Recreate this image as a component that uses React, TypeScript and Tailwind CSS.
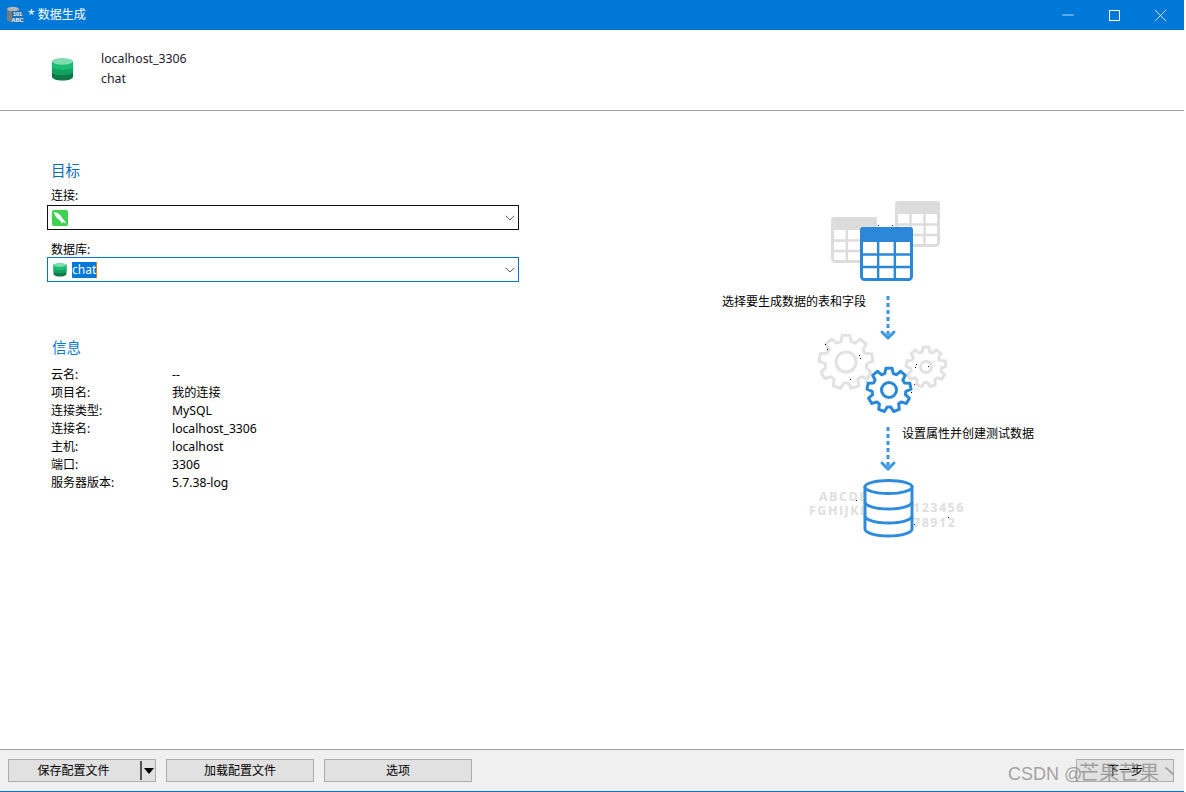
import type { ReactNode } from "react"
import { ChevronDown, Minus, X } from "lucide-react"

const uiFont = "font-['Noto_Sans','Noto_Sans_CJK_SC',sans-serif]"

const infoRows = [
  ["云名:", "--"],
  ["项目名:", "我的连接"],
  ["连接类型:", "MySQL"],
  ["连接名:", "localhost_3306"],
  ["主机:", "localhost"],
  ["端口:", "3306"],
  ["服务器版本:", "5.7.38-log"],
]

// stray pixels that sit on the illustration
const specks: [number, number, string][] = [
  [825, 344, "#000"], [827, 349, "#000"], [859, 355, "#000"], [860, 358, "#000"], [850, 379, "#000"],
  [916, 364, "#000"], [915, 367, "#000"], [928, 366, "#000"], [911, 392, "#000"], [856, 500, "#000"],
  [948, 517, "#000"], [866, 381, "#00e5ff"], [914, 384, "#f00"], [864, 394, "#ff0"], [914, 524, "#00f"],
  [878, 225, "#00f"], [892, 225, "#00f"],
]

function GreenDb({ className }: { className: string }) {
  return (
    <svg viewBox="0 0 24 24" className={className}>
      <path d="M1 4v16c0 2 5 4 11 4s11-2 11-4V4z" fill="#0b7a47" />
      <path d="M1 4v11c0 2 5 3.5 11 3.5S23 17 23 15V4z" fill="#12a25f" />
      <path d="M1 4v5.5c0 2 5 3.5 11 3.5s11-1.5 11-3.5V4z" fill="#1cbc75" />
      <ellipse cx="12" cy="4" rx="11" ry="3.5" fill="#7fdcae" />
    </svg>
  )
}

function TitleIcon() {
  return (
    <svg viewBox="0 0 18 18" className="size-[18px] shrink-0">
      <path d="M1 3v11c0 1.2 3 2 6 2s6-.8 6-2V3z" fill="#7b7b7b" />
      <ellipse cx="7" cy="3" rx="6" ry="2.2" fill="#b5b5b5" />
      <rect x="6" y="5" width="11" height="12" fill="#1f6fb5" />
      <text x="11.5" y="10.2" textAnchor="middle" fontSize="5.5" fontWeight="700" fill="#fff" fontFamily="Liberation Sans">101</text>
      <text x="11.5" y="16" textAnchor="middle" fontSize="5.5" fontWeight="700" fill="#fff" fontFamily="Liberation Sans">ABC</text>
    </svg>
  )
}

function gearPath(cx: number, cy: number, outer: number, inner: number, teeth: number) {
  const pts: string[] = []
  const step = (Math.PI * 2) / teeth
  for (let i = 0; i < teeth; i++) {
    const a = i * step - Math.PI / 2
    const add = (r: number, t: number) =>
      pts.push(`${(cx + r * Math.cos(a + t * step)).toFixed(1)} ${(cy + r * Math.sin(a + t * step)).toFixed(1)}`)
    add(inner, -0.36)
    add(outer, -0.2)
    add(outer, 0.2)
    add(inner, 0.36)
  }
  return "M" + pts.join("L") + "Z"
}

function DataTable({ x, y, w, h, head, color, sw }: { x: number; y: number; w: number; h: number; head: number; color: string; sw: number }) {
  const col = (w - sw) / 3
  const row = (h - head - sw / 2) / 3
  return (
    <g>
      <rect x={x + sw / 2} y={y + sw / 2} width={w - sw} height={h - sw} rx="3" fill="#fff" stroke={color} strokeWidth={sw} />
      <path d={`M${x} ${y + 3}a3 3 0 0 1 3-3h${w - 6}a3 3 0 0 1 3 3v${head - 3}H${x}z`} fill={color} />
      <path
        d={`M${x + col + sw / 2} ${y + head}V${y + h}M${x + 2 * col + sw / 2} ${y + head}V${y + h}M${x} ${y + head + row}H${x + w}M${x} ${y + head + 2 * row}H${x + w}`}
        stroke={color}
        strokeWidth={sw * 0.8}
        fill="none"
      />
    </g>
  )
}

function DashedArrow({ x, y1, y2 }: { x: number; y1: number; y2: number }) {
  return (
    <g stroke="#3a96e0" strokeWidth="3" fill="none">
      <path d={`M${x} ${y1}V${y2}`} strokeDasharray="4 3" />
      <path d={`M${x - 6} ${y2 - 4}l6 6 6-6`} strokeLinecap="round" strokeLinejoin="round" />
    </g>
  )
}

function Flow() {
  const gray = "#e2e2e2"
  const blue = "#2b88d8"
  const letters = "#dedede"
  return (
    <svg viewBox="800 195 180 350" className="w-[180px] h-[350px]">
      <DataTable x={895} y={201} w={45} h={46} head={13} color="#dcdcdc" sw={3} />
      <DataTable x={831} y={217} w={46} h={46} head={13} color="#dcdcdc" sw={3} />
      <DataTable x={860} y={227} w={53} h={54} head={15} color={blue} sw={3} />
      <DashedArrow x={888} y1={296} y2={336} />

      <path d={gearPath(846, 362, 27, 21, 9)} fill="#fff" stroke={gray} strokeWidth="3" strokeLinejoin="round" />
      <circle cx="846" cy="362" r="10" fill="none" stroke={gray} strokeWidth="3" />
      <path d={gearPath(926, 367, 20, 15.5, 9)} fill="#fff" stroke={gray} strokeWidth="3" strokeLinejoin="round" />
      <circle cx="926" cy="367" r="5.5" fill="none" stroke={gray} strokeWidth="3" />
      <path d={gearPath(889, 390, 22, 17, 9)} fill="#fff" stroke={blue} strokeWidth="3" strokeLinejoin="round" />
      <circle cx="889" cy="390" r="7.5" fill="none" stroke={blue} strokeWidth="3" />

      <DashedArrow x={888} y1={427} y2={467} />

      <g fill={letters} fontFamily="Open Sans" fontWeight="700" fontSize="12.5" letterSpacing="1.5">
        <text x="819" y="501">ABCDE</text>
        <text x="809" y="515">FGHIJKL</text>
        <text x="913" y="512">123456</text>
        <text x="913" y="527">78912</text>
      </g>
      <g fill="#fff" stroke="#2f8cdc" strokeWidth="3">
        <path d="M865 487v42c0 3.5 10 7 23.5 7s23.5-3.5 23.5-7v-42z" />
        <ellipse cx="888.5" cy="487" rx="23.5" ry="6.5" />
        <path d="M865 502c0 3.5 10 7 23.5 7s23.5-3.5 23.5-7M865 516c0 3.5 10 7 23.5 7s23.5-3.5 23.5-7" fill="none" />
      </g>
      {specks.map(([x, y, c]) => (
        <rect key={`${x}-${y}`} x={x} y={y} width="1" height="1" fill={c} />
      ))}
    </svg>
  )
}

function FooterButton({ children, className }: { children: ReactNode; className: string }) {
  return (
    <div className={`h-[23px] flex items-center justify-center border border-[#adadad] bg-[#e1e1e1] text-[12px] text-black ${className}`}>
      {children}
    </div>
  )
}

function Combo({ border, icon, children }: { border: string; icon: ReactNode; children?: ReactNode }) {
  return (
    <div className={`h-[25px] w-[472px] flex items-center border pl-[4px] ${border}`}>
      {icon}
      <div className="flex-1 flex items-center pl-[5px]">{children}</div>
      <ChevronDown className="size-[16px] text-[#444]" strokeWidth={1.3} />
    </div>
  )
}

export default function App() {
  return (
    <div className={`relative w-[1184px] h-[792px] flex flex-col overflow-hidden border-b border-[#0078d7] bg-white ${uiFont} text-[12px] text-black`}>
      <div className="h-[30px] shrink-0 bg-[#0078d7] flex items-center pl-[6px] text-white">
        <TitleIcon />
        <span className="ml-[4px] text-[12px]">* 数据生成</span>
        <div className="ml-auto flex items-center pr-[1px]">
          <div className="w-[46px] flex justify-center"><Minus className="size-[18px]" strokeWidth={1} /></div>
          <div className="w-[46px] flex justify-center"><div className="size-[11px] border border-white" /></div>
          <div className="w-[46px] flex justify-center"><X className="size-[21px]" strokeWidth={0.9} /></div>
        </div>
      </div>

      <div className="h-[81px] shrink-0 border-b border-[#a0a0a0] flex items-center pl-[51px] pb-[2px]">
        <GreenDb className="w-[23px] h-[24px]" />
        <div className="ml-[27px] text-[12.3px] leading-[20px] text-[#1a1a2e]">
          <div>localhost_3306</div>
          <div>chat</div>
        </div>
      </div>

      <div className="flex-1 flex">
        <div className="w-[800px] shrink-0 pl-[47px] pt-[49px]">
          <div className="pl-[4px] text-[14.5px] leading-[20px] text-[#0a6cbd]">目标</div>
          <div className="pl-[4px] mt-[8px] leading-[15px]">连接:</div>
          <div className="mt-[2px]">
            <Combo
              border="border-[#111]"
              icon={
                <svg viewBox="0 0 16 16" className="size-[16px] shrink-0">
                  <rect width="16" height="16" rx="2" fill="#3fd24f" />
                  <path d="M2 2c3 .5 5.5 1.5 7 4 1 1.500 2 3.5 4 5l1 2.5-3-1.5-1 1.5-2-3-2-1.5C4 7.5 2.5 5 2 2z" fill="#fff" />
                </svg>
              }
            />
          </div>
          <div className="pl-[4px] mt-[12px] leading-[15px]">数据库:</div>
          <Combo border="border-[#0078d7]" icon={<GreenDb className="w-[14px] h-[15px] ml-px shrink-0" />}>
            <span className="h-[16px] leading-[16px] bg-[#0078d7] text-white text-[12px] border-r border-[#e07b00]">chat</span>
          </Combo>

          <div className="pl-[5px] mt-[55px] text-[14.5px] leading-[20px] text-[#0a78d4]">信息</div>
          <div className="pl-[4px] mt-[9px] grid grid-cols-[121px_1fr] auto-rows-[18px] items-center">
            {infoRows.map(([label, value]) => (
              <div key={label} className="contents">
                <div>{label}</div>
                <div className="text-[12.2px]">{value}</div>
              </div>
            ))}
          </div>
        </div>

        <div className="relative flex-1 pt-[84px]">
          <Flow />
          <span className="absolute left-[-78px] top-[183px] whitespace-nowrap leading-[16px]">选择要生成数据的表和字段</span>
          <span className="absolute left-[102px] top-[315px] whitespace-nowrap leading-[16px]">设置属性并创建测试数据</span>
        </div>
      </div>

      <div className="h-[42px] shrink-0 border-t border-[#a0a0a0] bg-[#f0f0f0] flex items-center pl-[8px] pr-[10px]">
        <FooterButton className="w-[148px]">
          <span className="flex-1 text-center pr-[2px]">保存配置文件</span>
          <span className="h-[19px] w-[15px] border-l-2 border-[#555] flex items-center justify-center">
            <span className="w-0 h-0 border-x-[5px] border-x-transparent border-t-[6px] border-t-black" />
          </span>
        </FooterButton>
        <FooterButton className="w-[148px] ml-[10px]">加载配置文件</FooterButton>
        <FooterButton className="w-[148px] ml-[10px]">选项</FooterButton>
        <FooterButton className="w-[98px] ml-auto">下一步</FooterButton>
      </div>

      <span className="absolute left-[1008px] top-[760px] whitespace-nowrap font-['Liberation_Sans','Noto_Sans_CJK_SC',sans-serif] text-[18px] leading-[26px] text-[#8c8c8c]/80">
        CSDN @<span className="ml-[-3px] text-[20px]">芒果芒果丶</span>
      </span>
    </div>
  )
}
